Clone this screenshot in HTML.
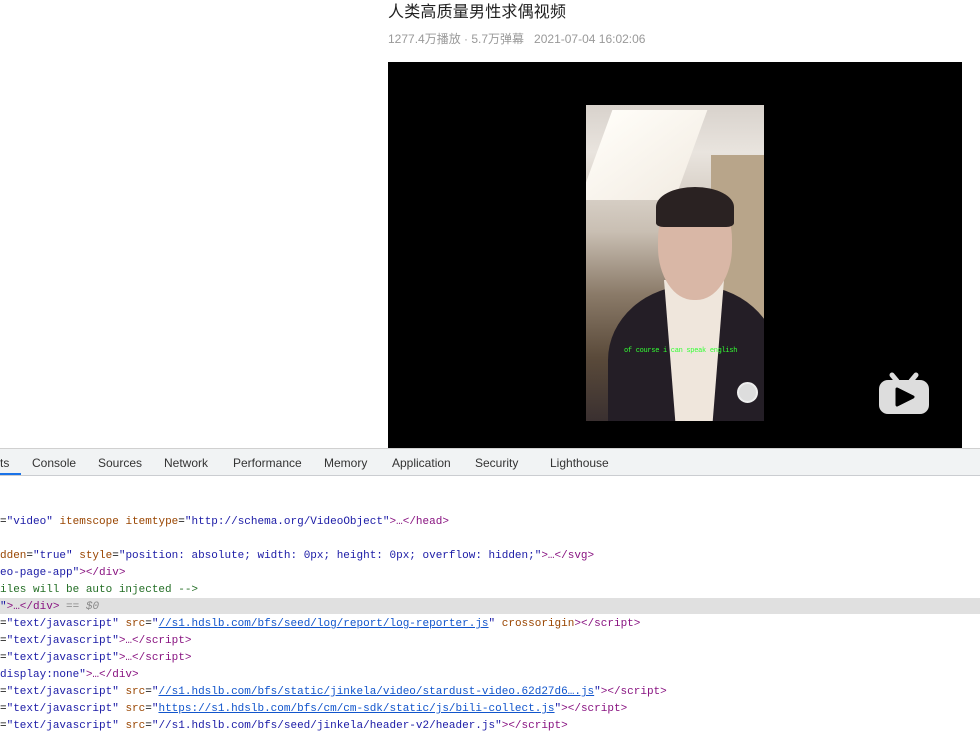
<!DOCTYPE html>
<html><head><meta charset="utf-8"><style>
*{margin:0;padding:0;box-sizing:border-box}
body{width:980px;height:726px;overflow:hidden;background:#fff;position:relative;font-family:"Liberation Sans","Noto Sans CJK SC",sans-serif}
.title{position:absolute;left:388px;top:2px;font-size:16px;color:#212121;line-height:22px;letter-spacing:0.2px}
.meta{position:absolute;left:388px;top:31px;font-size:12px;color:#999;line-height:16px}
.video{position:absolute;left:388px;top:62px;width:574px;height:386px;background:#000;overflow:hidden}
.clip{position:absolute;left:198px;top:43px;width:178px;height:316px;overflow:hidden;
background:linear-gradient(180deg,#d8d2cc 0%,#e9e4de 15%,#c9bfb3 40%,#8a7a68 60%,#5a4a3a 80%,#3a3030 100%)}
.light{position:absolute;top:5px;width:95px;height:90px;background:linear-gradient(135deg,#fffdf8,#f3ede4);transform:skewX(-20deg);left:10px}
.wall{position:absolute;left:125px;top:50px;width:53px;height:200px;background:#b8a58a}
.face{position:absolute;left:72px;top:85px;width:74px;height:110px;border-radius:45% 45% 48% 48%;background:#d9b7a6}
.hair{position:absolute;left:70px;top:82px;width:78px;height:40px;border-radius:50% 50% 10% 10%;background:#2a2222}
.suit{position:absolute;left:22px;top:180px;width:170px;height:150px;border-radius:50% 50% 0 0;background:#241e26}
.shirt{position:absolute;left:78px;top:175px;width:60px;height:150px;background:#efe6dc;clip-path:polygon(0 0,100% 0,80% 100%,20% 100%)}
.sub{position:absolute;left:38px;top:242px;font-family:"Liberation Mono",monospace;font-size:7px;color:#3f3;letter-spacing:-0.3px}
.av{position:absolute;left:151px;top:277px;width:21px;height:21px;border-radius:50%;background:#ddd;border:2px solid #eee}
.devbar{position:absolute;left:0;top:448px;width:980px;height:28px;background:#f1f3f4;border-top:1px solid #d0d0d0;border-bottom:1px solid #cbcdd1;font-size:12px;color:#333}
.devbar span{position:absolute;top:7px}
.tabline{position:absolute;left:0;top:473px;width:21px;height:2px;background:#1a73e8}
.l{position:absolute;left:0;white-space:pre;font-family:"Liberation Mono",monospace;font-size:11px;letter-spacing:0;line-height:17px}
.v{color:#1a1aa6}.a{color:#994500}.t{color:#881280}.u{text-decoration:underline;color:#1155cc}.c{color:#236e25}.g{color:#888}
.hl{position:absolute;left:0;top:598px;width:980px;height:16px;background:#e0e0e0}
</style></head><body>
<div class="title">人类高质量男性求偶视频</div>
<div class="meta">1277.4万播放 · 5.7万弹幕 &nbsp; 2021-07-04 16:02:06</div>
<div class="video">
 <div class="clip">
  <div class="light"></div><div class="wall"></div>
  <div class="suit"></div><div class="shirt"></div>
  <div class="face"></div><div class="hair"></div>
  <div class="sub">of course i can speak english</div>
  <div class="av"></div>
 </div>
 <svg style="position:absolute;left:490px;top:305px" width="52" height="48" viewBox="0 0 52 48">
  <path d="M14 8 L19 14 M38 8 L33 14" stroke="#ddd" stroke-width="5" stroke-linecap="round"/>
  <rect x="1" y="13" width="50" height="34" rx="9" fill="#ddd"/>
  <path d="M19 22 L35 30 L19 38 Z" fill="#000" stroke="#000" stroke-width="3" stroke-linejoin="round"/>
 </svg>
</div>
<div class="devbar">
 <span style="left:0">ts</span><span style="left:32px">Console</span><span style="left:98px">Sources</span><span style="left:164px">Network</span><span style="left:233px">Performance</span><span style="left:324px">Memory</span><span style="left:392px">Application</span><span style="left:475px">Security</span><span style="left:550px">Lighthouse</span>
</div>
<div class="tabline"></div>
<div class="hl"></div>
<div class="l" style="top:514px">=<span class="v">"video"</span> <span class="a">itemscope</span> <span class="a">itemtype</span>=<span class="v">"http://schema.org/VideoObject"</span><span class="t">&gt;…&lt;/head&gt;</span></div>
<div class="l" style="top:548px"><span class="a">dden</span>=<span class="v">"true"</span> <span class="a">style</span>=<span class="v">"position: absolute; width: 0px; height: 0px; overflow: hidden;"</span><span class="t">&gt;…&lt;/svg&gt;</span></div>
<div class="l" style="top:565px"><span class="v">eo-page-app"</span><span class="t">&gt;&lt;/div&gt;</span></div>
<div class="l" style="top:582px"><span class="c">iles will be auto injected --&gt;</span></div>
<div class="l" style="top:599px"><span class="v">"</span><span class="t">&gt;…&lt;/div&gt;</span> <span class="g">== <i>$0</i></span></div>
<div class="l" style="top:616px">=<span class="v">"text/javascript"</span> <span class="a">src</span>=<span class="v">"</span><span class="u">//s1.hdslb.com/bfs/seed/log/report/log-reporter.js</span><span class="v">"</span> <span class="a">crossorigin</span><span class="t">&gt;&lt;/script&gt;</span></div>
<div class="l" style="top:633px">=<span class="v">"text/javascript"</span><span class="t">&gt;…&lt;/script&gt;</span></div>
<div class="l" style="top:650px">=<span class="v">"text/javascript"</span><span class="t">&gt;…&lt;/script&gt;</span></div>
<div class="l" style="top:667px"><span class="v">display:none"</span><span class="t">&gt;…&lt;/div&gt;</span></div>
<div class="l" style="top:684px">=<span class="v">"text/javascript"</span> <span class="a">src</span>=<span class="v">"</span><span class="u">//s1.hdslb.com/bfs/static/jinkela/video/stardust-video.62d27d6….js</span><span class="v">"</span><span class="t">&gt;&lt;/script&gt;</span></div>
<div class="l" style="top:701px">=<span class="v">"text/javascript"</span> <span class="a">src</span>=<span class="v">"</span><span class="u">https://s1.hdslb.com/bfs/cm/cm-sdk/static/js/bili-collect.js</span><span class="v">"</span><span class="t">&gt;&lt;/script&gt;</span></div>
<div class="l" style="top:718px">=<span class="v">"text/javascript"</span> <span class="a">src</span>=<span class="v">"//s1.hdslb.com/bfs/seed/jinkela/header-v2/header.js"</span><span class="t">&gt;&lt;/script&gt;</span></div>
</body></html>
